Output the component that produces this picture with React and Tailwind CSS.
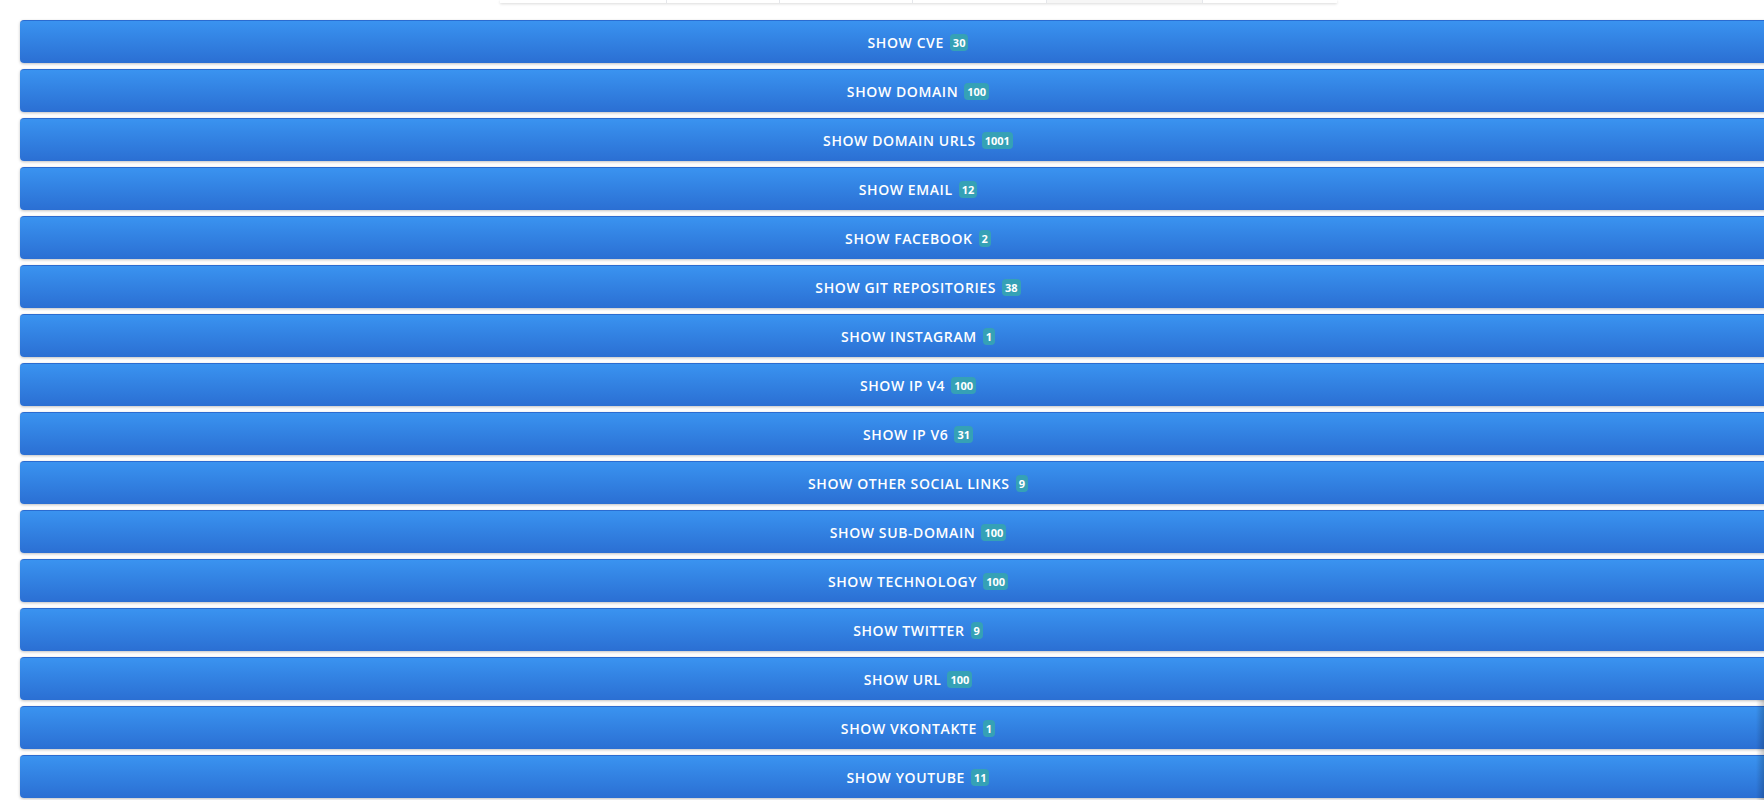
import React from "react";

const items = [
  ["CVE", 30],
  ["DOMAIN", 100],
  ["DOMAIN URLS", 1001],
  ["EMAIL", 12],
  ["FACEBOOK", 2],
  ["GIT REPOSITORIES", 38],
  ["INSTAGRAM", 1],
  ["IP V4", 100],
  ["IP V6", 31],
  ["OTHER SOCIAL LINKS", 9],
  ["SUB-DOMAIN", 100],
  ["TECHNOLOGY", 100],
  ["TWITTER", 9],
  ["URL", 100],
  ["VKONTAKTE", 1],
  ["YOUTUBE", 11],
];

const cells = [167, 113, 133, 134, 156, 134];

export default function App() {
  return (
    <div
      className="relative h-[800px] w-[1764px] overflow-hidden bg-white"
      style={{ fontFamily: '"Open Sans", "DejaVu Sans", sans-serif' }}
    >
      {/* table bottom edge peeking in at the top */}
      <div className="ml-[500px] flex h-[3px] w-[837px] bg-white shadow-[0_1px_3px_rgba(0,0,0,0.15)]">
        {cells.map((w, i) => (
          <div
            key={i}
            style={{ width: w }}
            className={
              "h-full border-r border-gray-200 last:border-r-0 " +
              (i === 4 ? "bg-[#f6f6f6]" : "bg-white")
            }
          />
        ))}
      </div>

      <div className="ml-[20px] mt-[17px] flex w-[1796px] flex-col gap-[6px]">
        {items.map(([label, count]) => (
          <button
            key={label}
            className="flex h-[43px] w-full items-center justify-center gap-[6px] rounded-[4px] border-t border-[#2a6bd0] bg-gradient-to-b from-[#3a93f0] to-[#2b6fd3] text-[14px] font-semibold tracking-[0.6px] text-white shadow-[0_1px_3px_rgba(0,0,0,0.25)]"
          >
            <span>SHOW {label}</span>
            <span className="flex h-[17px] items-center rounded-[4px] bg-[#35a1b6] px-[3px] text-[11px] font-bold leading-none tracking-normal text-white">
              {count}
            </span>
          </button>
        ))}
      </div>

      <div className="pointer-events-none absolute right-0 top-[700px] h-[100px] w-[8px] bg-gradient-to-r from-transparent to-black/20" />
    </div>
  );
}
